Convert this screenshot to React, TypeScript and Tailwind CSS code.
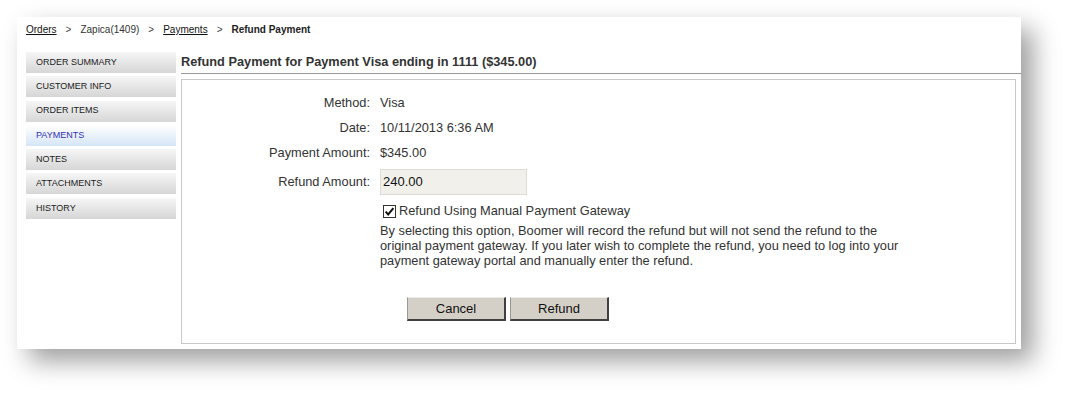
import React from "react";

const navItems = [
  "ORDER SUMMARY",
  "CUSTOMER INFO",
  "ORDER ITEMS",
  "PAYMENTS",
  "NOTES",
  "ATTACHMENTS",
  "HISTORY",
];

function CheckIcon() {
  return (
    <svg width="13" height="13" viewBox="0 0 13 13" className="block">
      <rect x="0.5" y="0.5" width="12" height="12" fill="#fff" stroke="#333" />
      <path d="M2.6 6.6 L5.2 9.4 L10.4 3.2" fill="none" stroke="#111" strokeWidth="2" />
    </svg>
  );
}

export default function App() {
  return (
    <div
      className="w-[1069px] h-[397px] bg-white overflow-hidden pt-[17px] pl-[17px]"
      style={{ fontFamily: '"Liberation Sans", Arial, sans-serif' }}
    >
      <div className="w-[1004px] h-[332px] bg-white shadow-[12px_12px_24px_rgba(0,0,0,0.38)] pl-[9px] pt-[6px]">
        {/* Breadcrumb */}
        <div className="flex items-center gap-[9px] h-[14px] leading-[14px] text-[10px] text-[#111]">
          <span className="underline">Orders</span>
          <span className="text-[#444]">&gt;</span>
          <span className="text-[#333]">Zapica(1409)</span>
          <span className="text-[#444]">&gt;</span>
          <span className="underline">Payments</span>
          <span className="text-[#444]">&gt;</span>
          <span className="font-bold text-[#222]">Refund Payment</span>
        </div>

        <div className="flex mt-[15px] gap-[5px]">
          {/* Left nav */}
          <div className="w-[150px] flex flex-col gap-[3.3px]">
            {navItems.map((item) => {
              const active = item === "PAYMENTS";
              return (
                <div
                  key={item}
                  className={
                    active
                      ? "h-[21px] flex items-center pl-[10px] text-[9px] text-[#3030c0] bg-linear-to-b from-[#ffffff] to-[#d5e5f6]"
                      : "h-[21px] flex items-center pl-[10px] text-[9px] text-[#222] bg-linear-to-b from-[#f6f6f6] to-[#d6d6d6]"
                  }
                >
                  {item}
                </div>
              );
            })}
          </div>

          {/* Right content */}
          <div className="w-[840px]">
            <div className="h-[22px] border-b border-[#9a9a9a] flex items-center pb-[2px] text-[12.75px] font-bold text-[#333]">
              Refund Payment for Payment Visa ending in 1111 ($345.00)
            </div>
            <div className="mt-[5px] w-[835px] h-[265px] border border-[#c8c8c8] pt-[10px] text-[12.8px] text-[#333]">
              <div className="grid grid-cols-[188px_auto] gap-x-[10px]">
                <div className="h-[25px] flex items-center justify-end">Method:</div>
                <div className="h-[25px] flex items-center">Visa</div>
                <div className="h-[25px] flex items-center justify-end">Date:</div>
                <div className="h-[25px] flex items-center">10/11/2013 6:36 AM</div>
                <div className="h-[25px] flex items-center justify-end">Payment Amount:</div>
                <div className="h-[25px] flex items-center">$345.00</div>
                <div className="h-[26px] mt-[4px] flex items-center justify-end">Refund Amount:</div>
                <div className="h-[26px] mt-[4px] flex items-center">
                  <div className="w-[147px] h-[26px] bg-[#f1f0eb] border border-[#dddcd6] flex items-center pl-[2px] text-[13px] text-[#111]">
                    240.00
                  </div>
                </div>
                <div></div>
                <div>
                  <div className="mt-[9px] h-[14px] flex items-center">
                    <div className="ml-[3px] mr-[3px]">
                      <CheckIcon />
                    </div>
                    <span className="leading-[14px]">Refund Using Manual Payment Gateway</span>
                  </div>
                  <div className="mt-[4.5px] leading-[15px] whitespace-nowrap">
                    <div>By selecting this option, Boomer will record the refund but will not send the refund to the</div>
                    <div>original payment gateway. If you later wish to complete the refund, you need to log into your</div>
                    <div>payment gateway portal and manually enter the refund.</div>
                  </div>
                  <div className="mt-[29.5px] ml-[27px] flex gap-[4px]">
                    <button className="w-[99px] h-[24px] bg-[#d4d0c8] border border-t-[#ecebe6] border-l-[#9a9893] border-r-[#404040] border-b-[#404040] border-r-2 border-b-2 text-[13px] text-[#111] flex items-center justify-center">
                      Cancel
                    </button>
                    <button className="w-[99px] h-[24px] bg-[#d4d0c8] border border-t-[#ecebe6] border-l-[#9a9893] border-r-[#404040] border-b-[#404040] border-r-2 border-b-2 text-[13px] text-[#111] flex items-center justify-center">
                      Refund
                    </button>
                  </div>
                </div>
              </div>
            </div>
          </div>
        </div>
      </div>
    </div>
  );
}
